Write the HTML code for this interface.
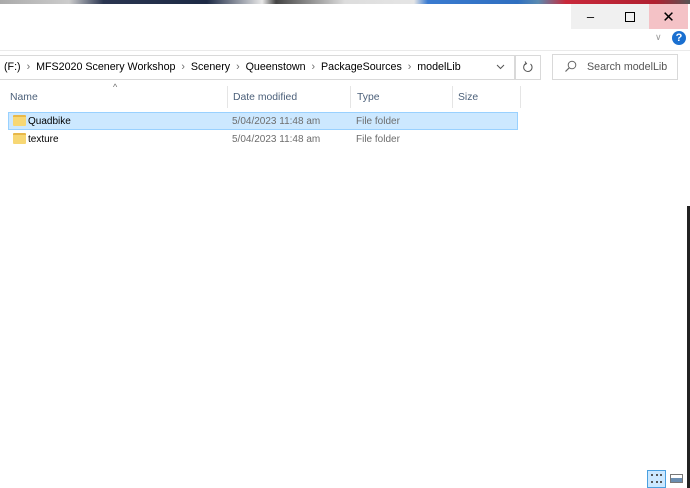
<!DOCTYPE html>
<html><head><meta charset="utf-8"><style>
*{margin:0;padding:0;box-sizing:border-box}
body{width:690px;height:488px;overflow:hidden;background:#fff;font-family:"Liberation Sans",sans-serif;font-size:10px;color:#000;position:relative}
.abs{position:absolute}
.strip{left:0;top:0;width:690px;height:4px;background:linear-gradient(90deg,#aaa 0,#ccc 10%,#2a3550 15%,#1d2a45 30%,#e8e8e8 38%,#444 40%,#ddd 50%,#e5e5e5 60%,#3a7bd0 62%,#2f6fc0 75%,#5a8ab0 78%,#c8283a 82%,#b02030 95%,#555 100%)}
.btn{top:4px;width:39px;height:25px;display:flex;align-items:center;justify-content:center;font-size:13px;color:#000}
.txt{white-space:nowrap}
.gray{color:#6d6d6d}
.hd{color:#4c607a;font-size:10.4px;top:92px}
.folder{width:13px;height:11px;background:#f7d774;border-radius:1px;border-top:2px solid #e8b84a}
</style></head><body>
<div class="abs strip"></div>
<div class="abs btn" style="left:571px;background:#f0f0f0">–</div>
<div class="abs btn" style="left:610px;background:#f0f0f0"><div style="width:10px;height:10px;border:1px solid #000"></div></div>
<div class="abs btn" style="left:649px;background:#f4c2c6;font-size:15px">✕</div>
<div class="abs txt" style="left:655px;top:32px;color:#999;font-size:9px">∨</div>
<div class="abs" style="left:672px;top:31px;width:14px;height:14px;border-radius:50%;background:#1a6fd0;color:#fff;font-weight:bold;font-size:11px;text-align:center;line-height:14px">?</div>
<div class="abs" style="left:0;top:50px;width:690px;height:1px;background:#eaeaea"></div>
<div class="abs" style="left:-2px;top:55px;width:517px;height:25px;border:1px solid #d9d9d9"></div>
<div class="abs txt" style="left:4px;top:61px;font-size:10.7px">(F:) <span class="gray">&nbsp;›&nbsp;</span> MFS2020 Scenery Workshop <span class="gray">&nbsp;›&nbsp;</span> Scenery <span class="gray">&nbsp;›&nbsp;</span> Queenstown <span class="gray">&nbsp;›&nbsp;</span> PackageSources <span class="gray">&nbsp;›&nbsp;</span> modelLib</div>
<svg class="abs" style="left:496px;top:64px" width="9" height="6"><path d="M1 1 L4.5 4.5 L8 1" stroke="#555" fill="none"/></svg>
<div class="abs" style="left:515px;top:55px;width:26px;height:25px;border:1px solid #d9d9d9"></div>
<svg class="abs" style="left:522px;top:61px" width="12" height="13"><path d="M4 2.5 A4.2 4.2 0 1 0 8.5 3" stroke="#555" fill="none"/><path d="M3 0.5 L4.5 2.7 L2.3 3.8" stroke="#555" fill="none"/></svg>
<div class="abs" style="left:552px;top:54px;width:126px;height:26px;border:1px solid #d9d9d9"></div>
<svg class="abs" style="left:564px;top:60px" width="13" height="13"><circle cx="8" cy="5" r="3.8" stroke="#666" fill="none"/><path d="M5.2 7.8 L1.5 11.5" stroke="#666" stroke-width="1.2"/></svg>
<div class="abs txt" style="left:587px;top:61px;color:#555;font-size:10.7px">Search modelLib</div>
<div class="abs txt gray" style="left:113px;top:82px;font-size:9px">^</div>
<div class="abs txt hd" style="left:10px">Name</div>
<div class="abs" style="left:227px;top:86px;width:1px;height:22px;background:#e5e5e5"></div>
<div class="abs txt hd" style="left:233px">Date modified</div>
<div class="abs" style="left:350px;top:86px;width:1px;height:22px;background:#e5e5e5"></div>
<div class="abs txt hd" style="left:357px">Type</div>
<div class="abs" style="left:452px;top:86px;width:1px;height:22px;background:#e5e5e5"></div>
<div class="abs txt hd" style="left:458px">Size</div>
<div class="abs" style="left:520px;top:86px;width:1px;height:22px;background:#e5e5e5"></div>
<div class="abs" style="left:8px;top:112px;width:510px;height:18px;background:#cce8ff;border:1px solid #99d1ff"></div>
<div class="abs folder" style="left:13px;top:115px"></div>
<div class="abs txt" style="left:28px;top:116px">Quadbike</div>
<div class="abs txt gray" style="left:232px;top:116px">5/04/2023 11:48 am</div>
<div class="abs txt gray" style="left:356px;top:116px">File folder</div>
<div class="abs folder" style="left:13px;top:133px"></div>
<div class="abs txt" style="left:28px;top:134px">texture</div>
<div class="abs txt gray" style="left:232px;top:134px">5/04/2023 11:48 am</div>
<div class="abs txt gray" style="left:356px;top:134px">File folder</div>
<div class="abs" style="left:687px;top:206px;width:3px;height:282px;background:#222"></div>
<div class="abs" style="left:647px;top:470px;width:19px;height:18px;background:#cce8ff;border:1px solid #4aa0e0"></div>
<div class="abs" style="left:651px;top:474px;width:11px;height:9px;border-top:2px dotted #555;border-bottom:2px dotted #555"></div>
<div class="abs" style="left:670px;top:474px;width:13px;height:9px;border:1px solid #777;background:linear-gradient(#fff 40%,#6a8db0 40%)"></div>
</body></html>
